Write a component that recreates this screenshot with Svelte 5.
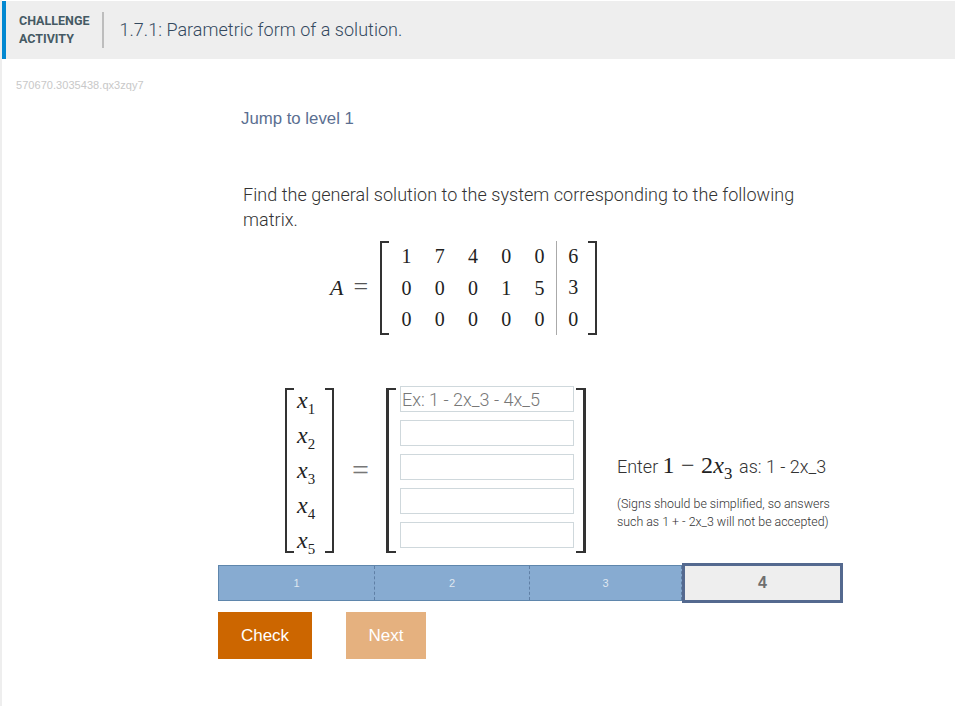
<script>
	const matrix = [
		[1, 7, 4, 0, 0, 6],
		[0, 0, 0, 1, 5, 3],
		[0, 0, 0, 0, 0, 0]
	];
	const vars = [1, 2, 3, 4, 5];
	const levels = [1, 2, 3, 4];
	const current = 4;
</script>

<div class="page">
	<header class="head">
		<div class="label">CHALLENGE<br />ACTIVITY</div>
		<h1>1.7.1: Parametric form of a solution.</h1>
	</header>

	<div class="code">570670.3035438.qx3zqy7</div>

	<main class="activity">
		<div class="jump">Jump to level 1</div>

		<p class="prompt">Find the general solution to the system corresponding to the following matrix.</p>

		<div class="eq-a">
			<span class="math"><i>A</i><span class="eq-sign">=</span></span>
			<div class="bracket matrix">
				{#each matrix as row}
					{#each row as n, i}
						<span class:aug={i === 5}>{n}</span>
					{/each}
				{/each}
			</div>
		</div>

		<div class="answer">
			<div class="bracket vars">
				{#each vars as v}
					<span class="math"><i>x</i><sub>{v}</sub></span>
				{/each}
			</div>
			<span class="math equals">=</span>
			<div class="bracket inputs">
				{#each vars as v}
					<input type="text" placeholder={v === 1 ? 'Ex: 1 - 2x_3 - 4x_5' : ''} />
				{/each}
			</div>
			<div class="hint">
				<div class="enter">Enter <span class="math inline">1 − 2<i>x</i><sub>3</sub></span> as: 1 - 2x_3</div>
				<div class="note">(Signs should be simplified, so answers<br />such as 1 + - 2x_3 will not be accepted)</div>
			</div>
		</div>

		<div class="levels">
			{#each levels as l}
				<div class="level" class:active={l === current}>{l}</div>
			{/each}
		</div>

		<div class="buttons">
			<button class="check">Check</button>
			<button class="next">Next</button>
		</div>
	</main>
</div>

<style>
	:global(body) {
		background: #fff;
		overflow: hidden;
	}
	.page {
		height: 706px;
		box-sizing: border-box;
		padding-top: 1px;
		border-left: 2px solid #eee;
		font-family: Roboto, "Liberation Sans", sans-serif;
		color: #444;
	}
	.head {
		display: flex;
		align-items: center;
		height: 58px;
		box-sizing: border-box;
		background: #eee;
		border-left: 4px solid #0288d1;
		padding-left: 13px;
	}
	.label {
		font-size: 12.5px;
		font-weight: 700;
		line-height: 18px;
		color: #455a64;
		padding-right: 13px;
		border-right: 2px solid #bdbdbd;
		height: 36px;
	}
	h1 {
		margin: 0 0 2px 15px;
		font-size: 18px;
		font-weight: 300;
		letter-spacing: 0.03px;
		color: #34495e;
	}
	.code {
		margin: 19px 0 0 14px;
		font: 11px/14px "Liberation Sans", sans-serif;
		letter-spacing: 0.05px;
		color: #c8c8c8;
	}
	.activity {
		width: 625px;
		margin-left: 216px;
	}
	.jump {
		margin: 17px 0 0 23px;
		font: 16.8px/20px "Liberation Sans", sans-serif;
		color: #5b6f91;
	}
	.prompt {
		width: 570px;
		margin: 53px 0 0 25px;
		font-size: 18px;
		font-weight: 300;
		line-height: 25px;
		letter-spacing: 0.04px;
		color: #333;
	}
	.math {
		font-family: "Liberation Serif", serif;
		color: #222;
	}
	.math sub {
		font-size: 0.7em;
		line-height: 0;
	}
	.bracket {
		position: relative;
		border-left: 2px solid #333;
		border-right: 2px solid #333;
	}
	.bracket::before,
	.bracket::after {
		content: "";
		position: absolute;
		left: 0;
		right: 0;
		height: 2px;
		background: linear-gradient(to right, #333 7px, transparent 7px, transparent calc(100% - 7px), #333 calc(100% - 7px));
	}
	.bracket::before {
		top: 0;
	}
	.bracket::after {
		bottom: 0;
	}
	.eq-a {
		display: flex;
		align-items: center;
		gap: 12px;
		margin: 9px 0 0 112px;
		font-size: 22px;
	}
	.eq-sign {
		margin-left: 10px;
		font-size: 26px;
		line-height: 0;
		color: #555;
	}
	.matrix {
		display: grid;
		grid-template-columns: repeat(6, 33.3px);
		grid-auto-rows: 31.5px;
		width: 217px;
		padding: 0 0 0 2px;
		justify-content: center;
		align-items: center;
		justify-items: center;
		font-family: "Liberation Serif", serif;
		font-size: 20px;
		color: #222;
		height: 94px;
		align-content: center;
		box-sizing: border-box;
	}
	.aug {
		align-self: stretch;
		justify-self: stretch;
		text-align: center;
		line-height: 31.5px;
		border-left: 1px solid #aaa;
	}
	.answer {
		display: flex;
		align-items: flex-start;
		margin: 51px 0 0 67px;
	}
	.vars {
		display: flex;
		flex-direction: column;
		gap: 7px;
		box-sizing: border-box;
		width: 49px;
		height: 165px;
		margin-top: 2px;
		padding-left: 10px;
		font-size: 24px;
	}
	.vars .math {
		flex: none;
		height: 28px;
		line-height: 24px;
	}
	.vars sub {
		font-size: 0.62em;
	}
	.equals {
		font-size: 30px;
		line-height: 30px;
		margin: 69px 17px 0 18px;
		color: #777;
	}
	.inputs {
		display: flex;
		flex-direction: column;
		box-sizing: border-box;
		width: 200px;
		height: 165px;
		margin-top: 2px;
		padding-left: 11px;
		border-width: 3px;
	}
	input {
		flex: none;
		width: 174px;
		height: 26px;
		margin: -2px 0 10px;
		padding: 0 0 0 1px;
		box-sizing: border-box;
		border: 1px solid #cfd8dc;
		background: #fff;
		font-family: Roboto, sans-serif;
		font-size: 18px;
		font-weight: 300;
		outline: none;
	}
	input::placeholder {
		color: #777;
		opacity: 1;
	}
	.hint {
		margin: 66px 0 0 31px;
		font-weight: 300;
		white-space: nowrap;
	}
	.enter {
		font-size: 18px;
		line-height: 26px;
		color: #333;
	}
	.inline {
		font-size: 24px;
		letter-spacing: 0.2px;
		font-weight: 400;
		margin-right: 2px;
	}
	.note {
		margin-top: 15px;
		font-size: 12.4px;
		line-height: 18px;
		color: #333;
	}
	.levels {
		display: grid;
		grid-template-columns: 156px 155px 152px 1fr;
		height: 36px;
		margin-top: 12px;
		box-sizing: border-box;
		background: #87abd1;
		border: 1px solid #5f86ac;
	}
	.level {
		display: flex;
		align-items: center;
		justify-content: center;
		font: 11px "Liberation Sans", sans-serif;
		color: #dfe7f0;
		border-right: 1px dashed #5f7fa5;
	}
	.level.active {
		margin: -3px -1px -3px 0;
		background: #eee;
		border: 3px solid #54698f;
		font-size: 16px;
		font-weight: 700;
		color: #6f6f6f;
	}
	.buttons {
		display: flex;
		gap: 34px;
		margin-top: 11px;
	}
	button {
		height: 47px;
		border: 0;
		padding: 0;
		font: 17px "Liberation Sans", sans-serif;
		color: #fff;
	}
	.check {
		width: 94px;
		background: #cc6600;
	}
	.next {
		width: 80px;
		background: #e5b17f;
	}
</style>
